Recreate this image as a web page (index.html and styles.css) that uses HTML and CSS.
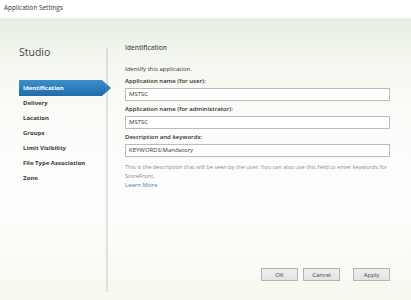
FILE: index.html
```html
<!doctype html>
<html>

<head>
  <title>Application Settings</title>
  <link rel="stylesheet" href="styles.css">
</head>

<body>
  <div class="window">
    <div class="title-bar">Application Settings</div>
    <div class="main">
      <div class="sidebar">
        <div class="studio">Studio</div>
        <ul class="nav">
          <li class="nav-item selected">Identification</li>
          <li class="nav-item">Delivery</li>
          <li class="nav-item">Location</li>
          <li class="nav-item">Groups</li>
          <li class="nav-item">Limit Visibility</li>
          <li class="nav-item">File Type Association</li>
          <li class="nav-item">Zone</li>
        </ul>
      </div>
      <div class="divider"></div>
      <div class="content">
        <div class="heading">Identification</div>
        <div class="intro">Identify this application.</div>

        <label class="field-label">Application name (for user):</label>
        <div class="field">MSTSC</div>

        <label class="field-label">Application name (for administrator):</label>
        <div class="field">MSTSC</div>

        <label class="field-label">Description and keywords:</label>
        <div class="field">KEYWORDS:Mandatory</div>

        <div class="hint">This is the description that will be seen by the user. You can also use this field to enter keywords for StoreFront.</div>
        <a class="learn-more">Learn More</a>

        <div class="button-row">
          <button type="button">OK</button>
          <button type="button">Cancel</button>
          <button type="button" class="apply">Apply</button>
        </div>
      </div>
    </div>
  </div>
</body>

</html>
```

FILE: styles.css
```css
body {
  margin: 0;
  font-family: 'Open Sans', 'Noto Sans', sans-serif;
  color: #3c3c3c;
}

.window {
  width: 411px;
  height: 300px;
  display: flex;
  flex-direction: column;
  background: #fff;
  overflow: hidden;
}

.title-bar {
  height: 18px;
  line-height: 16px;
  padding-left: 4px;
  font-size: 6.4px;
  color: #333;
  background: #fff;
}

.main {
  flex: 1;
  display: flex;
  background: linear-gradient(#e7eee0 0, #f4f7ef 40px, #fcfdfa 110px, #fdfdfb 200px, #f6f9ef 100%);
}

/* left side navigation */
.sidebar {
  width: 105px;
  padding-top: 27px;
  box-sizing: border-box;
}

.studio {
  padding-left: 19px;
  font-size: 10.5px;
  line-height: 14px;
  color: #444;
}

.nav {
  list-style: none;
  margin: 21px 0 0 0;
  padding: 0 0 0 19px;
}

.nav-item {
  height: 15px;
  line-height: 15px;
  padding-left: 4px;
  font-size: 6px;
  font-weight: bold;
  color: #3a3a3a;
}

.nav-item.selected {
  position: relative;
  z-index: 1;
  height: 16px;
  line-height: 16px;
  margin-right: -6px;
  color: #fff;
  background: linear-gradient(#3c8fcc, #1f6ba8);
  clip-path: polygon(0 0, calc(100% - 9px) 0, 100% 50%, calc(100% - 9px) 100%, 0 100%);
}

.divider {
  width: 3px;
  margin: 29px 0 8px 0;
  background: linear-gradient(to right, rgba(220, 223, 224, 0), rgba(196, 200, 202, 0.7));
}

/* right content panel */
.content {
  flex: 1;
  display: flex;
  flex-direction: column;
  padding: 25px 21px 19px 17px;
  font-size: 6px;
}

.heading {
  line-height: 10px;
  font-size: 6.5px;
  font-weight: 600;
  color: #555;
}

.intro {
  margin-top: 12px;
  line-height: 9px;
  color: #333;
}

.field-label {
  display: block;
  margin-top: 3px;
  line-height: 9px;
  color: #2e2e2e;
  font-weight: 600;
}

.field {
  height: 13px;
  margin-top: 2px;
  margin-bottom: 1px;
  padding-left: 3px;
  box-sizing: border-box;
  line-height: 11px;
  border: 1px solid #b9bcbc;
  background: #fff;
  color: #333;
}

.hint {
  margin-top: 5px;
  line-height: 9px;
  font-size: 5.8px;
  letter-spacing: -0.06px;
  color: #8c8c8c;
}

.learn-more {
  line-height: 8px;
  color: #3d80c2;
}

.button-row {
  margin-top: auto;
  display: flex;
  justify-content: flex-end;
  gap: 5px;
}

button {
  width: 37px;
  height: 13px;
  padding: 0;
  border: 1px solid #b4b4b4;
  background: linear-gradient(#efefef, #e3e3e3);
  font-family: 'Open Sans', 'Noto Sans', sans-serif;
  font-size: 6px;
  color: #444;
}

button.apply {
  margin-left: 8px;
}
```
